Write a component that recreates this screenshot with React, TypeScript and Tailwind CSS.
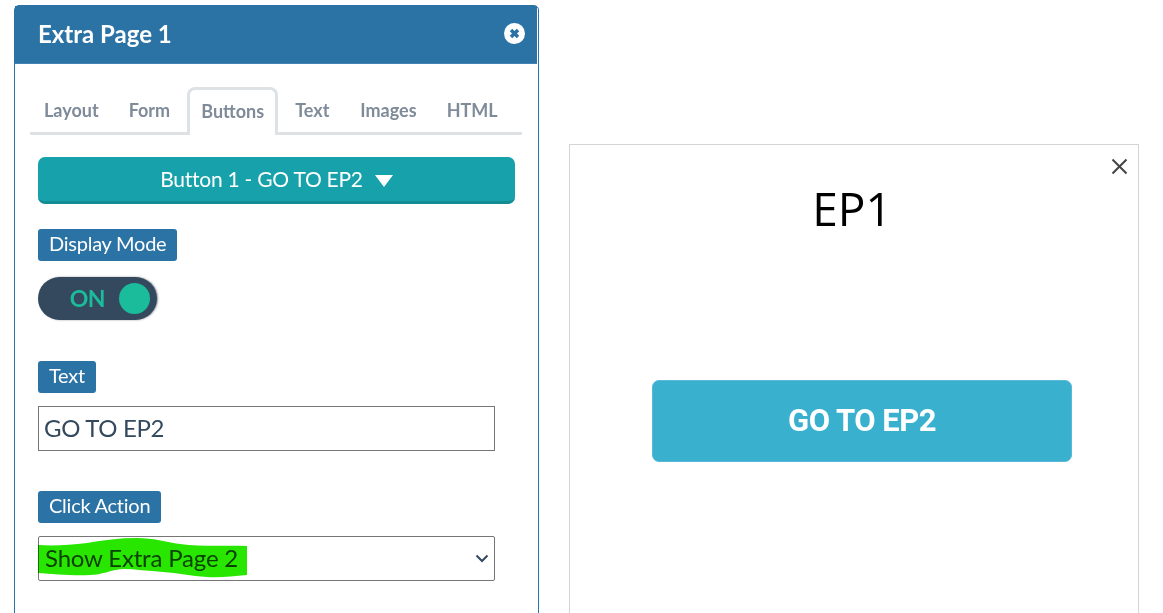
const tabs = ['Layout', 'Form', 'Buttons', 'Text', 'Images', 'HTML'];

const FieldLabel = ({ text }: { text: string }) => (
  <div className="w-fit h-[32px] px-[11px] bg-[#2c73a5] rounded-[3px] text-white text-[20px] tracking-[-0.25px] leading-[29px]">{text}</div>
);

const App = () => {
  return (
    <div className="h-[613px] overflow-hidden bg-white flex items-start pl-[14px] pt-[5px] font-['Lato',sans-serif]">
      {/* Editor panel */}
      <div className="w-[525px] h-[700px] shrink-0 border border-[#2c73a5] rounded-t-[5px]">
        <div className="h-[58px] mr-[1px] bg-[#2c73a5] border-b border-[#4384b3] flex items-center justify-between pl-[23px] pr-[12px]">
          <h1 className="text-white text-[24px] font-bold pb-[2px]">Extra Page 1</h1>
          <svg className="mb-[2px]" width="21" height="21" viewBox="0 0 21 21">
            <circle cx="10.500" cy="10.500" r="10.500" fill="#fff" />
            <path d="M7 7l7 7M14 7l-7 7" stroke="#2c73a5" strokeWidth="3.500" />
          </svg>
        </div>

        {/* Tabs */}
        <div className="ml-[15px] mr-[16px] mt-[23px] h-[48px] border-b-[3px] border-[#dfe2e5] flex pl-[1px]">
          {tabs.map((t) =>
            t === 'Buttons' ? (
              <div key={t} className="h-[48px] w-[91px] border-[3px] border-b-0 border-[#dfe2e5] rounded-t-[8px] bg-white text-center text-[#7f8b99] text-[18px] font-bold leading-[42px]">
                {t}
              </div>
            ) : (
              <div key={t} className={`text-[#7f8b99] text-[18px] font-bold leading-[46px] ${t === 'Layout' ? 'ml-[13px] mr-[30px]' : t === 'Form' ? 'mr-[17px]' : t === 'Text' ? 'ml-[17px] mr-[31px]' : t === 'Images' ? 'mr-[30px]' : ''}`}>
                {t}
              </div>
            ),
          )}
        </div>

        <div className="px-[23px] pt-[22px]">
          {/* Button selector */}
          <div className="w-[477px] h-[47px] bg-[#17a2ab] border-b-[3px] border-[#148c94] rounded-[7px] flex items-center justify-center gap-[12px] text-white text-[21px] tracking-[-0.25px]">
            <span className="pb-[1px]">Button 1 - GO TO EP2</span>
            <svg className="mt-[3px]" width="18" height="12" viewBox="0 0 18 12">
              <path d="M0 0h18l-9 12z" fill="#fff" />
            </svg>
          </div>

          <div className="mt-[25px]">
            <FieldLabel text="Display Mode" />
          </div>

          {/* Toggle */}
          <div className="mt-[16px] w-[119px] h-[43px] bg-[#34495e] rounded-full shadow-[1px_0_2px_#8a929b] flex items-center justify-end pr-[7px] gap-[14px]">
            <span className="text-[#1abc9c] text-[23px] font-bold tracking-[-0.5px]">ON</span>
            <span className="w-[31px] h-[31px] rounded-full bg-[#1abc9c]" />
          </div>

          <div className="mt-[41px]">
            <FieldLabel text="Text" />
          </div>
          <div className="mt-[13px] w-[457px] h-[45px] border border-[#767676] flex items-center pl-[5px] pb-[2px] text-[#34495e] text-[24px] tracking-[-0.33px]">
            GO TO EP2
          </div>

          <div className="mt-[40px]">
            <FieldLabel text="Click Action" />
          </div>
          <div className="relative mt-[13px] w-[457px] h-[45px] border border-[#767676] rounded-[2px] flex items-center justify-between pl-[6px] pr-[5px] pb-[2px] text-[#34495e] text-[24px] tracking-[-0.18px]">
            <span>Show Extra Page 2</span>
            <svg className="mt-[2px]" width="14" height="9" viewBox="0 0 14 9">
              <path d="M1.500 1.500L7 7l5.500-5.500" fill="none" stroke="#34495e" strokeWidth="2" />
            </svg>
            {/* Marker highlight drawn over the option */}
            <svg className="absolute left-[-1px] top-0 mix-blend-multiply pointer-events-none" width="210" height="43" viewBox="0 0 210 43">
              <path
                d="M0 8C16 9 32 8 49 6C65 3 82 1 99 1C115 1 128 5 142 7C165 10 190 8 209 9L209 38C195 39 182 41 169 40C153 39 140 36 125 35C110 34 97 32 85 32C72 33 64 38 52 38C35 39 15 37 0 36Z"
                fill="#28e600"
              />
            </svg>
          </div>
        </div>
      </div>

      {/* Preview */}
      <div className="ml-[30px] mt-[139px] w-[570px] h-[600px] shrink-0 border border-[#d5d5d5] font-['Open_Sans',sans-serif]">
        <div className="flex justify-end pt-[13px] pr-[10px] h-[30px]">
          <svg width="17" height="17" viewBox="0 0 17 17">
            <path d="M1.500 1.500l14 14M15.500 1.500l-14 14" stroke="#444" strokeWidth="2" />
          </svg>
        </div>
        <div className="text-center text-black text-[46px] leading-[60px] pr-[4px] mt-[3px]">EP1</div>
        <div className="ml-[82px] mt-[142px] w-[420px] h-[82px] bg-[#3ab0cf] border border-[#5ab9d8] rounded-[7px] flex items-center justify-center text-white text-[31px] tracking-[-0.5px] font-bold font-['Roboto',sans-serif]">
          GO TO EP2
        </div>
      </div>
    </div>
  );
};

export default App;
